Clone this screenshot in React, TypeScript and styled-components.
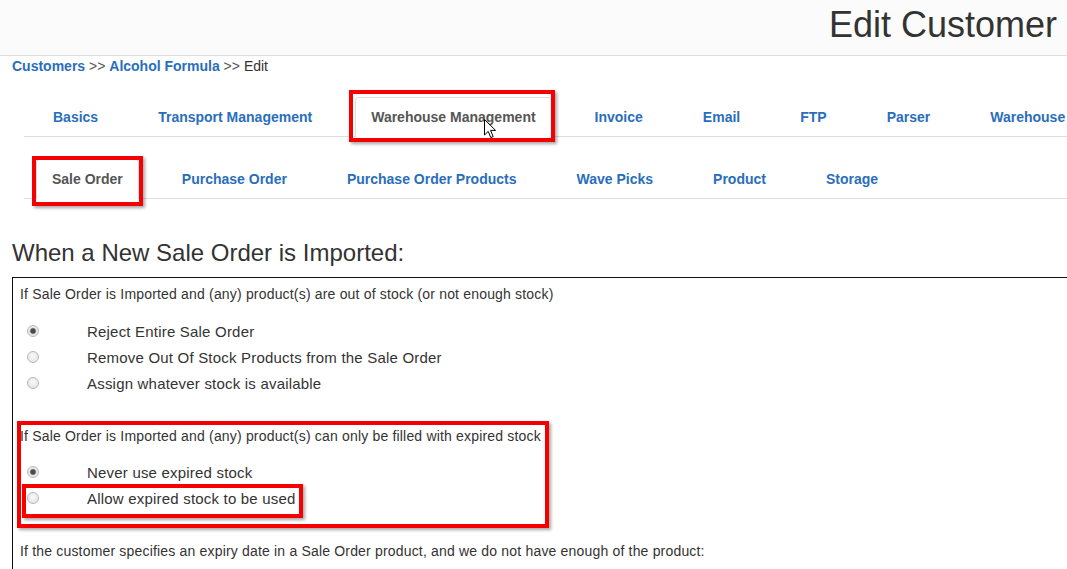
import styled, { createGlobalStyle } from "styled-components";

const GlobalStyle = createGlobalStyle`
  html, body {
    margin: 0;
    padding: 0;
    background: #fff;
    overflow: hidden;
  }
  body {
    font-family: "Liberation Sans", Arial, sans-serif;
    color: #333;
  }
`;

const Page = styled.div`
  width: 1067px;
  height: 569px;
  overflow: hidden;
`;

const Header = styled.header`
  height: 40px;
  padding: 5px 10px 10px 0;
  background: #fbfbfb;
  border-bottom: 1px solid #dedede;
  display: flex;
  justify-content: flex-end;
`;

const Title = styled.h1`
  margin: 0;
  font-size: 36px;
  line-height: 40px;
  font-weight: normal;
  color: #333;
`;

const Content = styled.main`
  padding: 2px 0 0 12px;
`;

const Breadcrumb = styled.div`
  font-size: 14px;
  line-height: 16px;
  color: #555;
`;

const Crumb = styled.a`
  color: #2a6ebb;
  font-weight: bold;
  text-decoration: none;
`;

const Current = styled.span`
  color: #333;
`;

const TabBar = styled.ul<{ $top: number }>`
  list-style: none;
  margin: ${(p) => p.$top}px 0 0 12px;
  padding: 0;
  display: flex;
  flex-wrap: nowrap;
  border-bottom: 1px solid #ddd;
  white-space: nowrap;
`;

const Tab = styled.li<{ $active?: boolean; $inset?: string }>`
  position: relative;
  margin: 0 13px -1px;
  padding: 0 ${(p) => (p.$active ? 15 : 16)}px;
  height: 40px;
  display: flex;
  align-items: center;
  font-size: 14px;
  font-weight: bold;
  color: ${(p) => (p.$active ? "#555" : "#2a6ebb")};
  background: ${(p) => (p.$active ? "#fff" : "transparent")};
  border: 1px solid ${(p) => (p.$active ? "#ddd" : "transparent")};
  border-bottom-color: transparent;
  border-radius: 4px 4px 0 0;
  box-sizing: border-box;
  &:first-child {
    margin-left: 12px;
  }
`;

/* red annotation frame drawn over a part of the screenshot */
const Marked = styled.div<{ $inset: string }>`
  position: relative;
  &::after {
    content: "";
    position: absolute;
    inset: ${(p) => p.$inset};
    border: 4px solid #f40000;
    box-shadow: 2px 2px 3px rgba(0, 0, 0, 0.35);
    pointer-events: none;
  }
`;

const MarkedTab = styled(Tab)`
  &::after {
    content: "";
    position: absolute;
    inset: ${(p) => p.$inset};
    border: 4px solid #f40000;
    box-shadow: 2px 2px 3px rgba(0, 0, 0, 0.35);
    pointer-events: none;
  }
`;

const Cursor = styled.svg`
  position: absolute;
  left: 128px;
  top: 21px;
  width: 13px;
  height: 20px;
`;

const Heading = styled.h2`
  margin: 40px 0 10px;
  font-size: 24px;
  line-height: 28px;
  font-weight: normal;
  color: #333;
`;

const Panel = styled.section`
  border: 1px solid #111;
  margin-right: -40px;
  padding: 8px 0 40px 7px;
`;

const Question = styled.p<{ $gap: number }>`
  margin: ${(p) => p.$gap}px 0 0;
  font-size: 14px;
  letter-spacing: 0.18px;
  line-height: 16px;
  color: #333;
`;

const Options = styled.div<{ $gap: number }>`
  margin-top: ${(p) => p.$gap}px;
  display: flex;
  flex-direction: column;
  align-items: flex-start;
`;

const Option = styled.label`
  height: 26px;
  display: flex;
  align-items: center;
  font-size: 15px;
  letter-spacing: 0.2px;
  color: #333;
`;

const Radio = styled.span<{ $checked?: boolean }>`
  width: 12px;
  height: 12px;
  margin: 0 48px 0 7px;
  border-radius: 50%;
  box-sizing: border-box;
  border: 1px solid #b8b8b8;
  background: ${(p) =>
    p.$checked
      ? "radial-gradient(circle, #4a4a4a 0 2.2px, #9a9a9a 2.8px, #e6e6e6 3.6px, #f4f4f4 100%)"
      : "radial-gradient(circle at 50% 40%, #fafafa, #dedede)"};
  flex: none;
`;

const Group = styled(Marked)`
  width: fit-content;
  margin-top: 32px;
`;

type Opt = { label: string; checked?: boolean };

const stockOptions: Opt[] = [
  { label: "Reject Entire Sale Order", checked: true },
  { label: "Remove Out Of Stock Products from the Sale Order" },
  { label: "Assign whatever stock is available" },
];

const mainTabs = [
  "Basics",
  "Transport Management",
  "Warehouse Management",
  "Invoice",
  "Email",
  "FTP",
  "Parser",
  "Warehouse",
];

const subTabs = [
  "Sale Order",
  "Purchase Order",
  "Purchase Order Products",
  "Wave Picks",
  "Product",
  "Storage",
];

function App() {
  return (
    <Page>
      <GlobalStyle />
      <Header>
        <Title>Edit Customer</Title>
      </Header>
      <Content>
        <Breadcrumb>
          <Crumb href="#">Customers</Crumb> &gt;&gt; <Crumb href="#">Alcohol Formula</Crumb> &gt;&gt;{" "}
          <Current>Edit</Current>
        </Breadcrumb>

        <TabBar $top={23}>
          {mainTabs.map((t) =>
            t === "Warehouse Management" ? (
              <MarkedTab key={t} $active $inset="-8px -4px -6px -7px">
                {t}
                <Cursor viewBox="0 0 13 20">
                  <path
                    d="M0.5 0.5 L0.5 16 L4.2 12.4 L6.8 18.6 L9.2 17.6 L6.6 11.4 L11.6 11.4 Z"
                    fill="#fff"
                    stroke="#000"
                    strokeWidth="1"
                    strokeLinejoin="round"
                  />
                </Cursor>
              </MarkedTab>
            ) : (
              <Tab key={t}>{t}</Tab>
            )
          )}
        </TabBar>

        <TabBar $top={22}>
          {subTabs.map((t) =>
            t === "Sale Order" ? (
              <MarkedTab key={t} $active $inset="-4px -5px -8px -5px">
                {t}
              </MarkedTab>
            ) : (
              <Tab key={t}>{t}</Tab>
            )
          )}
        </TabBar>

        <Heading>When a New Sale Order is Imported:</Heading>

        <Panel>
          <Question $gap={0}>
            If Sale Order is Imported and (any) product(s) are out of stock (or not enough stock)
          </Question>
          <Options $gap={16}>
            {stockOptions.map((o) => (
              <Option key={o.label}>
                <Radio $checked={o.checked} />
                {o.label}
              </Option>
            ))}
          </Options>

          <Group $inset="-7px -8px -17px -3px">
            <Question $gap={0}>
              If Sale Order is Imported and (any) product(s) can only be filled with expired stock
            </Question>
            <Options $gap={15}>
              <Option>
                <Radio $checked />
                Never use expired stock
              </Option>
              <Marked $inset="-1px -7px -7px 2px">
                <Option>
                  <Radio />
                  Allow expired stock to be used
                </Option>
              </Marked>
            </Options>
          </Group>

          <Question $gap={32}>
            If the customer specifies an expiry date in a Sale Order product, and we do not have enough of the
            product:
          </Question>
        </Panel>
      </Content>
    </Page>
  );
}

export default App;
